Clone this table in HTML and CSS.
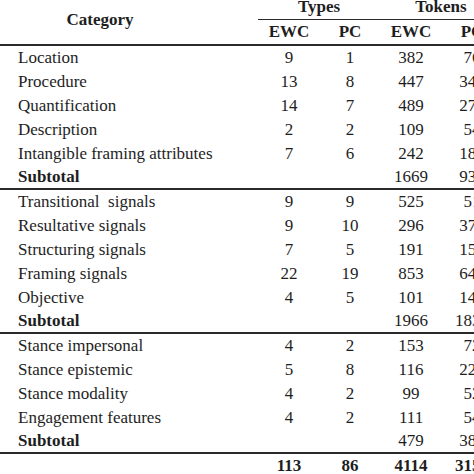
FILE: index.html
```html
<!DOCTYPE html>
<html>
<head>
<meta charset="utf-8">
<link rel="stylesheet" href="styles.css">
</head>
<body>
<div class="page">
<table class="tbl">
  <colgroup>
    <col class="c-cat"><col class="c-n1"><col class="c-n2"><col class="c-n3"><col class="c-n4">
  </colgroup>
  <thead>
    <tr class="h1">
      <th rowspan="2" class="cat-h">Category</th>
      <th colspan="2" class="grp">Types</th>
      <th colspan="2" class="grp">Tokens</th>
    </tr>
    <tr class="h2">
      <th>EWC</th><th>PC</th><th>EWC</th><th>PC</th>
    </tr>
  </thead>
  <tbody>
    <tr><td class="cat">Location</td><td>9</td><td>1</td><td>382</td><td>76</td></tr>
    <tr><td class="cat">Procedure</td><td>13</td><td>8</td><td>447</td><td>345</td></tr>
    <tr><td class="cat">Quantification</td><td>14</td><td>7</td><td>489</td><td>273</td></tr>
    <tr><td class="cat">Description</td><td>2</td><td>2</td><td>109</td><td>54</td></tr>
    <tr><td class="cat">Intangible framing attributes</td><td>7</td><td>6</td><td>242</td><td>184</td></tr>
    <tr class="sub"><td class="cat">Subtotal</td><td></td><td></td><td class="reg">1669</td><td class="reg">932</td></tr>
  </tbody>
  <tbody>
    <tr><td class="cat">Transitional&nbsp; signals</td><td>9</td><td>9</td><td>525</td><td>51</td></tr>
    <tr><td class="cat">Resultative signals</td><td>9</td><td>10</td><td>296</td><td>377</td></tr>
    <tr><td class="cat">Structuring signals</td><td>7</td><td>5</td><td>191</td><td>154</td></tr>
    <tr><td class="cat">Framing signals</td><td>22</td><td>19</td><td>853</td><td>646</td></tr>
    <tr><td class="cat">Objective</td><td>4</td><td>5</td><td>101</td><td>145</td></tr>
    <tr class="sub"><td class="cat">Subtotal</td><td></td><td></td><td class="reg">1966</td><td class="reg">1833</td></tr>
  </tbody>
  <tbody>
    <tr><td class="cat">Stance impersonal</td><td>4</td><td>2</td><td>153</td><td>72</td></tr>
    <tr><td class="cat">Stance epistemic</td><td>5</td><td>8</td><td>116</td><td>225</td></tr>
    <tr><td class="cat">Stance modality</td><td>4</td><td>2</td><td>99</td><td>52</td></tr>
    <tr><td class="cat">Engagement features</td><td>4</td><td>2</td><td>111</td><td>54</td></tr>
    <tr class="sub"><td class="cat">Subtotal</td><td></td><td></td><td class="reg">479</td><td class="reg">383</td></tr>
  </tbody>
  <tfoot>
    <tr class="total"><td class="cat"></td><td>113</td><td>86</td><td>4114</td><td>3150</td></tr>
  </tfoot>
</table>
</div>
</body>
</html>
```

FILE: styles.css
```css
html, body {
  margin: 0;
  padding: 0;
  background: #fff;
}
.page {
  width: 474px;
  height: 474px;
  overflow: hidden;
}
.tbl {
  margin-top: -5px;
  border-collapse: collapse;
  table-layout: fixed;
  width: 502px;
  font-family: "Liberation Serif", "DejaVu Serif", serif;
  font-size: 17px;
  color: #1e1e1e;
}
.c-cat { width: 258px; }
.c-n1 { width: 62px; }
.c-n2 { width: 60px; }
.c-n3 { width: 62px; }
.c-n4 { width: 60px; }
.tbl th, .tbl td {
  padding: 0;
  height: 24px;
  line-height: 24px;
  text-align: center;
  white-space: nowrap;
  vertical-align: middle;
}
.tbl th { font-weight: bold; }
.h1 th { height: 24px; }
.h1 .grp { border-bottom: 1px solid #2a2a2a; }
.h2 th { height: 23px; border-bottom: 2px solid #2a2a2a; }
.tbl th.cat-h {
  border-bottom: 2px solid #2a2a2a;
  padding-right: 58px;
}
.tbl td.cat {
  text-align: left;
  padding-left: 18px;
}
.tbl .sub td {
  height: 22px;
  line-height: 22px;
  border-bottom: 2px solid #2a2a2a;
}
.sub .cat { font-weight: bold; }
.sub .reg { font-weight: normal; }
.total td { font-weight: bold; }
```
